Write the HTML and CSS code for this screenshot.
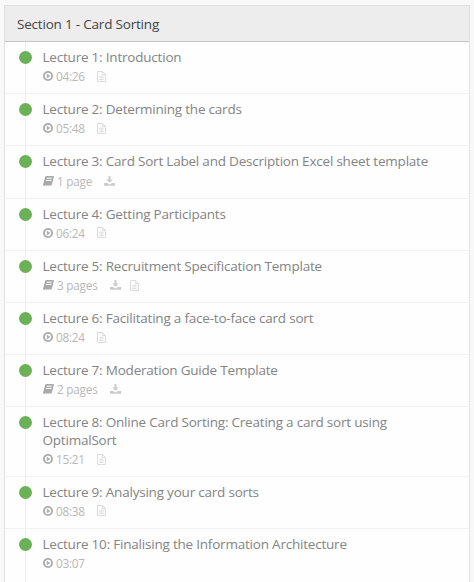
FILE: index.html
```
<!DOCTYPE html>
<html lang="en">
	<head>
		<meta charset="utf-8" />
		<title>Card Sorting</title>
		<link rel="stylesheet" href="styles.css">
	</head>
	<body>
		<svg class="sprite" width="0" height="0">
			<symbol id="play" viewBox="0 0 10 10">
				<circle cx="5" cy="5" r="4.1" fill="none" stroke="currentColor" stroke-width="1.8" />
				<path d="M3.8 2.8v4.4L7.3 5z" />
			</symbol>
			<symbol id="book" viewBox="0 0 11 10">
				<path fill-rule="evenodd" d="M3.2 0h7.1q.8.1.6.9L9 8.2q-.3.9-1.2.9H1.7q-.5.1-.2.4h7.1L8.3 10H1.3Q0 9.8.1 8.5L2.1.9Q2.4 0 3.2 0zM3.9 1.8l-.3 1h5.2l.3-1zM3.3 3.9l-.3 1h5.2l.3-1z" />
			</symbol>
			<symbol id="file" viewBox="0 0 9 11">
				<path fill="none" stroke="currentColor" stroke-width=".9" d="M.5.5h5l3 3v7h-8zM5.5.5v3h3M2.4 5.2h4.2M2.4 6.9h4.2M2.4 8.6h4.2" />
			</symbol>
			<symbol id="download" viewBox="0 0 11 10">
				<path d="M4.5 0h2v3.5h2.3L5.5 6.8 2.2 3.5h2.3zM0 7h3l2.500 1.500L8 7h3v2.700H0z" />
			</symbol>
		</svg>
		<main class="curriculum">
			<h1 class="section-title">Section 1 - Card Sorting</h1>
			<ul class="lectures">
				<li class="lecture">
					<span class="dot"></span>
					<div class="info">
						<h2>Lecture 1: Introduction</h2>
						<div class="meta"><svg class="play"><use href="#play" /></svg><span>04:26</span><svg class="file"><use href="#file" /></svg></div>
					</div>
				</li>
				<li class="lecture">
					<span class="dot"></span>
					<div class="info">
						<h2>Lecture 2: Determining the cards</h2>
						<div class="meta"><svg class="play"><use href="#play" /></svg><span>05:48</span><svg class="file"><use href="#file" /></svg></div>
					</div>
				</li>
				<li class="lecture">
					<span class="dot"></span>
					<div class="info">
						<h2>Lecture 3: Card Sort Label and Description Excel sheet template</h2>
						<div class="meta"><svg class="book"><use href="#book" /></svg><span>1 page</span><svg class="download"><use href="#download" /></svg></div>
					</div>
				</li>
				<li class="lecture">
					<span class="dot"></span>
					<div class="info">
						<h2>Lecture 4: Getting Participants</h2>
						<div class="meta"><svg class="play"><use href="#play" /></svg><span>06:24</span><svg class="file"><use href="#file" /></svg></div>
					</div>
				</li>
				<li class="lecture">
					<span class="dot"></span>
					<div class="info">
						<h2>Lecture 5: Recruitment Specification Template</h2>
						<div class="meta"><svg class="book"><use href="#book" /></svg><span>3 pages</span><svg class="download"><use href="#download" /></svg><svg class="file"><use href="#file" /></svg></div>
					</div>
				</li>
				<li class="lecture">
					<span class="dot"></span>
					<div class="info">
						<h2>Lecture 6: Facilitating a face-to-face card sort</h2>
						<div class="meta"><svg class="play"><use href="#play" /></svg><span>08:24</span><svg class="file"><use href="#file" /></svg></div>
					</div>
				</li>
				<li class="lecture">
					<span class="dot"></span>
					<div class="info">
						<h2>Lecture 7: Moderation Guide Template</h2>
						<div class="meta"><svg class="book"><use href="#book" /></svg><span>2 pages</span><svg class="download"><use href="#download" /></svg></div>
					</div>
				</li>
				<li class="lecture">
					<span class="dot"></span>
					<div class="info">
						<h2>Lecture 8: Online Card Sorting: Creating a card sort using OptimalSort</h2>
						<div class="meta"><svg class="play"><use href="#play" /></svg><span>15:21</span><svg class="file"><use href="#file" /></svg></div>
					</div>
				</li>
				<li class="lecture">
					<span class="dot"></span>
					<div class="info">
						<h2>Lecture 9: Analysing your card sorts</h2>
						<div class="meta"><svg class="play"><use href="#play" /></svg><span>08:38</span><svg class="file"><use href="#file" /></svg></div>
					</div>
				</li>
				<li class="lecture">
					<span class="dot"></span>
					<div class="info">
						<h2>Lecture 10: Finalising the Information Architecture</h2>
						<div class="meta"><svg class="play"><use href="#play" /></svg><span>03:07</span></div>
					</div>
				</li>
			</ul>
		</main>
	</body>
</html>
```
FILE: styles.css
```
* {
	box-sizing: border-box;
}
body {
	height: 582px;
	margin: 0;
	padding: 5px 4px 0 4px;
	overflow: hidden;
	background: #f8f8f8;
	font-family: "Open Sans", sans-serif;
}
.sprite {
	position: absolute;
}
.curriculum {
	height: 577px;
	overflow: hidden;
	background: #fefefe;
	border: solid 1px #e0e0e0;
	border-bottom: 0;
}
.section-title {
	height: 36px;
	margin: 0;
	padding-left: 12px;
	border-bottom: solid 1px #c4c4c4;
	background: #ededed;
	color: #444;
	font-size: 13.5px;
	font-weight: 400;
	letter-spacing: -.2px;
	line-height: 36px;
}
.lectures {
	margin: 0;
	padding: 0;
	list-style: none;
}
.lecture {
	display: flex;
	min-height: 52.2px;
	padding: 7px 40px 7px 14px;
	border-bottom: solid 1px #f2f2f2;
	/* timeline running behind the dots */
	background: linear-gradient(#f4ece9, #f4ece9) 20px 0 / 1px 100% no-repeat;
}
.lecture:last-child {
	min-height: 54px;
	border-bottom: 0;
}
.dot {
	flex: none;
	width: 13px;
	height: 13px;
	margin: 2px 10.5px 0 0;
	border-radius: 50%;
	background: #6bb158;
}
h2 {
	margin: 0;
	color: #848484;
	font-size: 13.5px;
	font-weight: 400;
	letter-spacing: -.21px;
	line-height: 17.5px;
}
.meta {
	display: flex;
	align-items: center;
	height: 19px;
	margin-top: .3px;
	color: #b8b8b8;
	font-size: 11.8px;
	letter-spacing: -.24px;
}
.meta span {
	margin: 0 12px 0 3.5px;
}
svg {
	fill: currentColor;
}
.play {
	width: 10px;
	height: 10px;
	color: #aaa;
}
.book {
	width: 11px;
	height: 10px;
	color: #aaa;
}
.file {
	width: 9px;
	height: 11px;
	color: #d8d8d8;
}
.download {
	width: 11px;
	height: 10px;
	margin-right: 9px;
	color: #ccc;
}
```
